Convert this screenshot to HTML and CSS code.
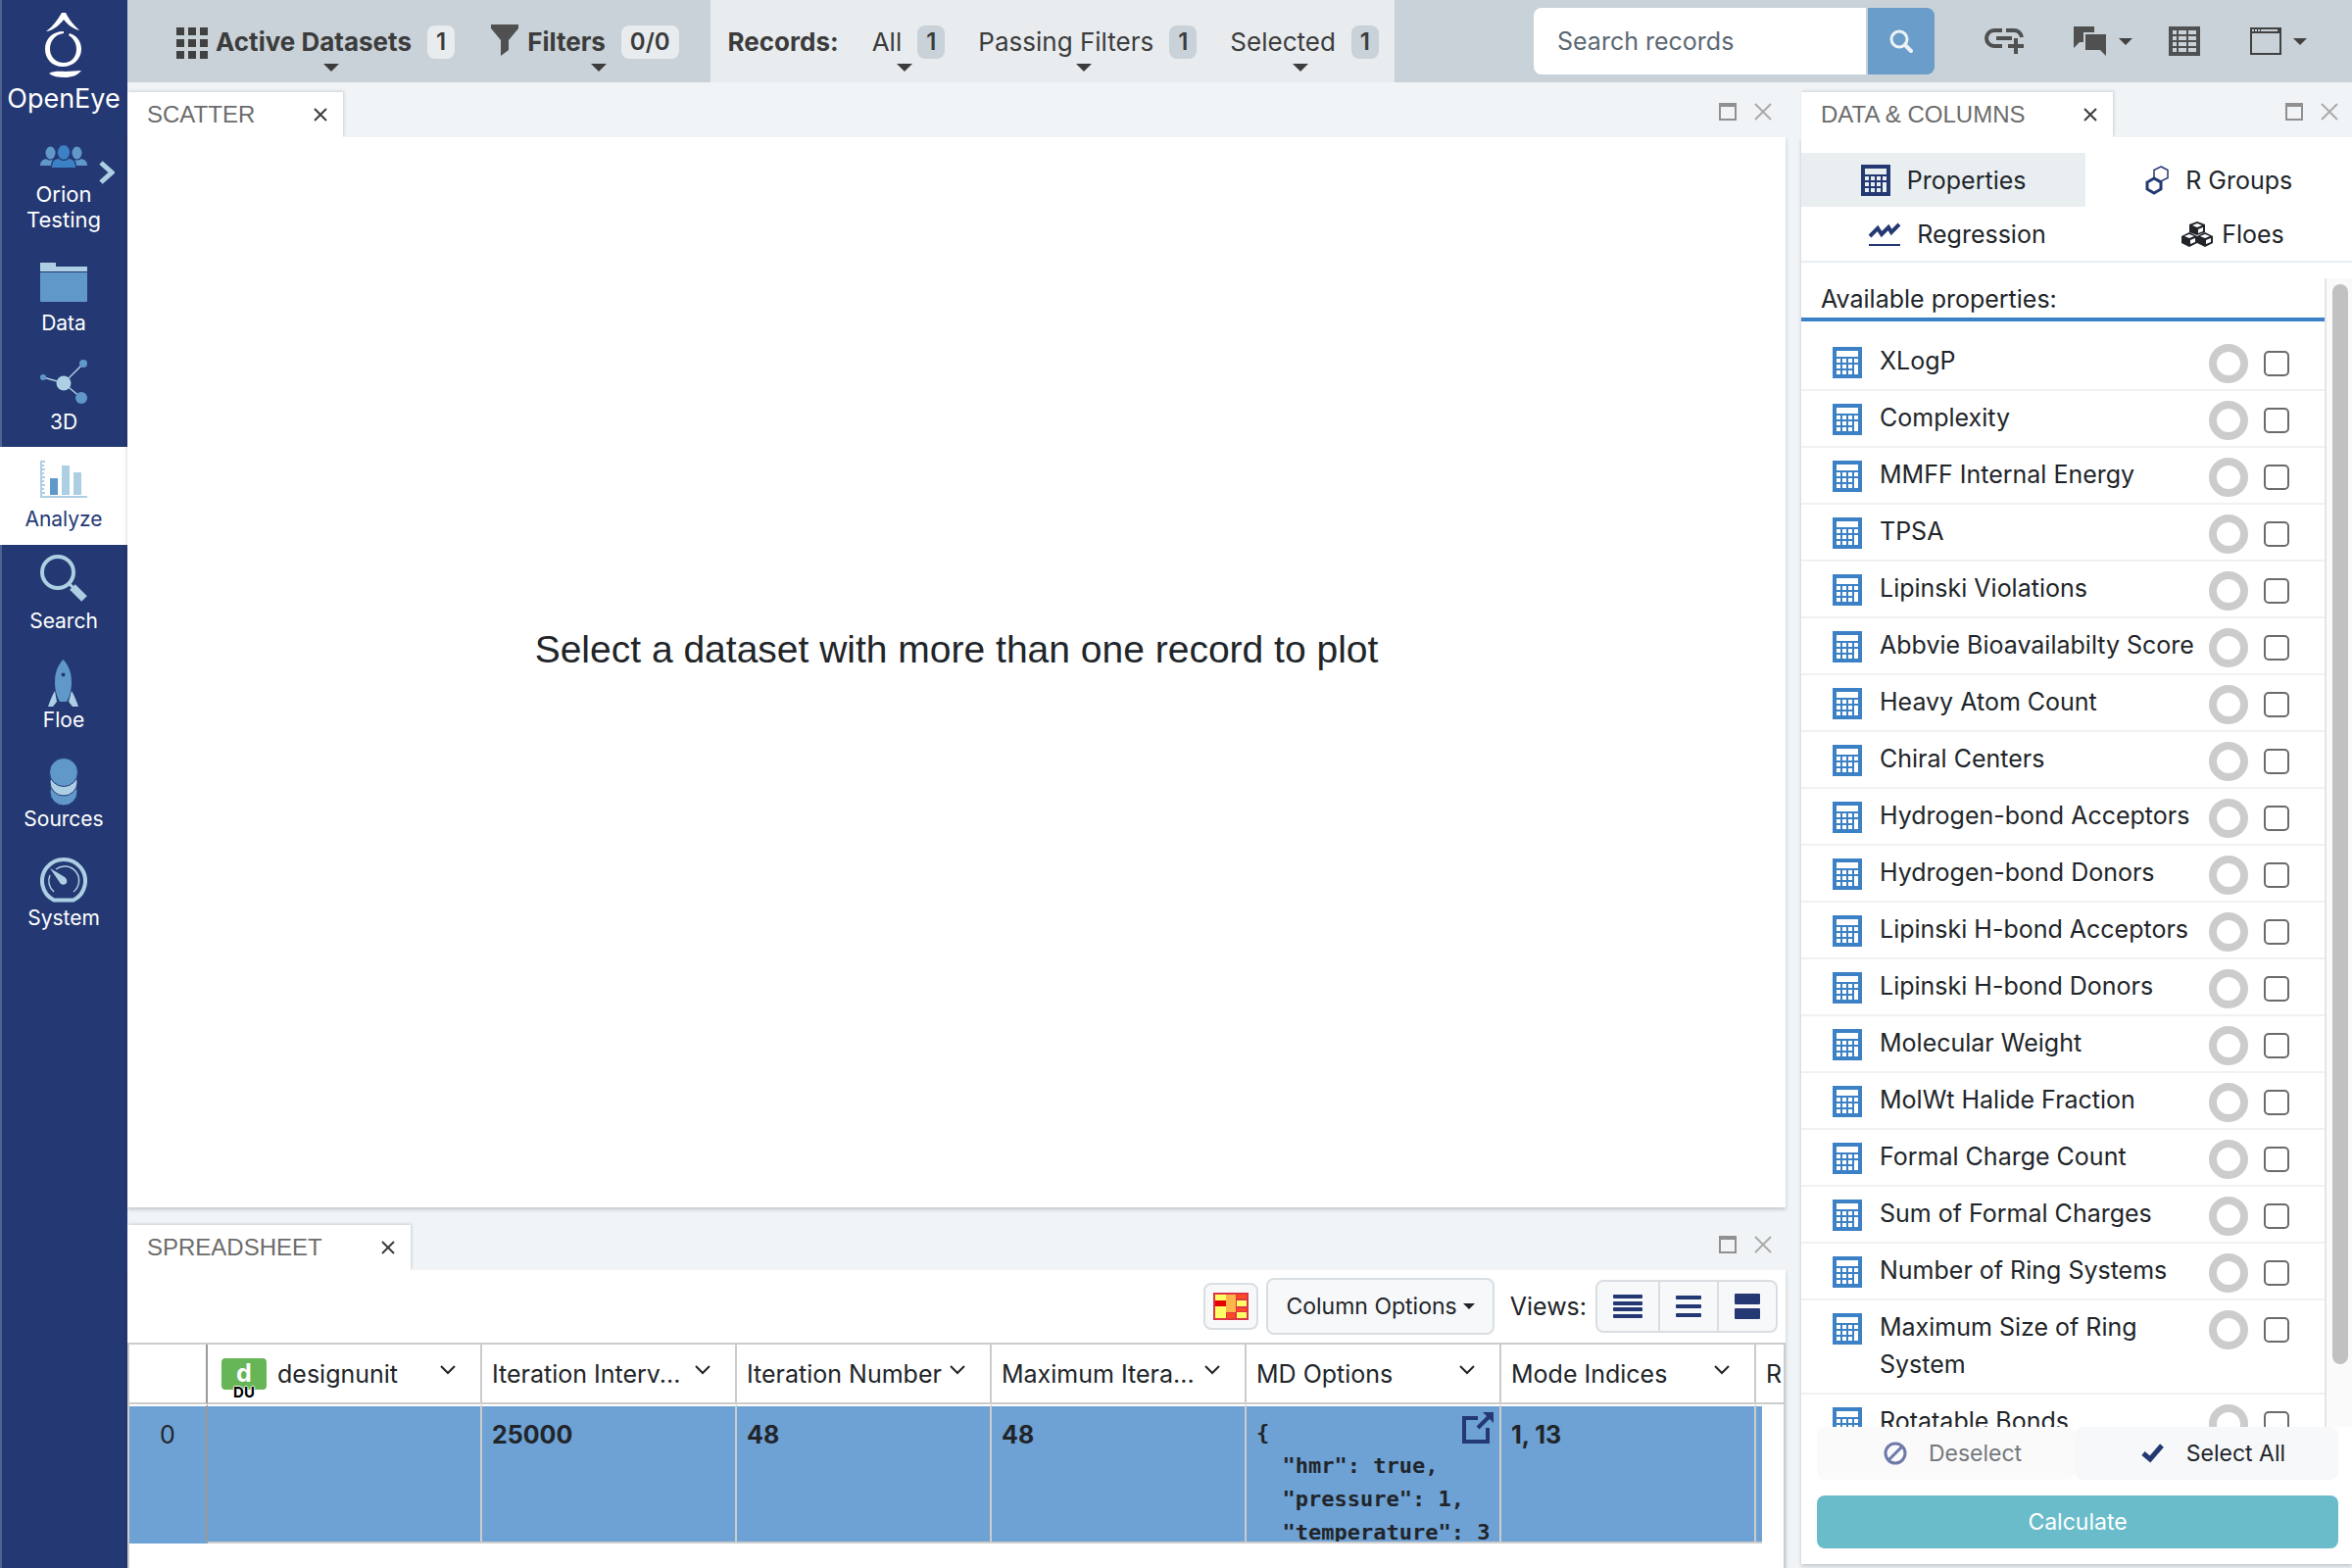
FILE: index.html
```html
<!DOCTYPE html>
<html lang="en">
	<head>
		<meta charset="UTF-8" />
		<title>Orion - Analyze</title>
		<link rel="stylesheet" href="styles.css">
	</head>

	<body>
		<!-- shared icons -->
		<svg class="sprite" aria-hidden="true">
			<symbol id="calc" viewBox="0 0 30 32">
				<path fill="currentColor" fill-rule="evenodd" d="M0 0h30v32H0zM4 4v6h22V4zM4 12v4h4v-4zM10 12v4h4v-4zM16 12v4h4v-4zM22 12v4h4v-4zM4 18v4h4v-4zM10 18v4h4v-4zM16 18v4h4v-4zM4 24v4h4v-4zM10 24v4h4v-4zM16 24v4h4v-4zM22 18v10h4V18z" />
			</symbol>
			<symbol id="close" viewBox="0 0 14 14">
				<path d="M1 1l12 12M13 1L1 13" stroke="currentColor" stroke-width="2" fill="none" />
			</symbol>
			<symbol id="cross" viewBox="0 0 18 18">
				<path d="M1 1l16 16M17 1L1 17" stroke="currentColor" stroke-width="2" fill="none" />
			</symbol>
			<symbol id="maximize" viewBox="0 0 18 18">
				<path fill="currentColor" fill-rule="evenodd" d="M0 0h18v18H0zM2 4v12h14V4z" />
			</symbol>
			<symbol id="chevron" viewBox="0 0 16 10">
				<path d="M1 1l7 7 7-7" stroke="currentColor" stroke-width="2" fill="none" />
			</symbol>
		</svg>

		<nav class="sidebar">
			<a class="logo" href="#">
				<svg width="40" height="68" viewBox="0 0 40 68" fill="#fff">
					<path d="M2 20C9 15 14 8 18 1h4c4 8 9 13 14 18-7-2-12-6-16-11C16 13 10 19 2 20z" />
					<path fill-rule="evenodd" d="M20 20C8 20 1 28 1 38s7 18 18 18 19-8 19-18c0-8-5-14-12-16l-1 2c5 3 8 8 8 14 0 8-5 14-13 14S6 46 6 38s5-15 14-16z" />
					<path d="M5 63c5-3 12-2 17-2l16-1c-4 5-10 7-17 7-6 0-12-1-16-4z" />
				</svg>
				OpenEye
			</a>
			<button class="project">
				<svg width="48" height="24" viewBox="0 0 48 24">
					<g fill="#6098c9">
						<ellipse cx="10.500" cy="8" rx="5" ry="6.500" />
						<ellipse cx="37.500" cy="8" rx="5" ry="6.500" />
						<path d="M0 21c0-4 2-6 6-7 3 2 6 2 8 0-2 2-3 4-3 7zM48 21c0-4-2-6-6-7-3 2-6 2-8 0 2 2 3 4 3 7z" />
					</g>
					<path fill="#3c81c5" stroke="#243973" d="M11.500 23.500c0-6 2-9 7-10 4 2.500 7 2.500 11 0 5 1 7 4 7 10z" />
					<ellipse cx="24" cy="7.500" rx="6.500" ry="7.800" fill="#3c81c5" stroke="#243973" />
				</svg>
				<span>Orion<br>Testing</span>
				<svg class="expand" width="16" height="24" viewBox="0 0 16 24">
					<path d="M2 2l11 10L2 22" fill="none" stroke="#adcfe3" stroke-width="5" />
				</svg>
			</button>
			<a class="nav-item" href="#">
				<svg width="48" height="54" viewBox="0 0 48 54">
					<path fill="#adcfe3" d="M0 6h16v4h32v5H0z" />
					<path fill="#6098c9" d="M0 16h48v29a1 1 0 0 1-1 1H1a1 1 0 0 1-1-1z" />
				</svg>
				Data
			</a>
			<a class="nav-item" href="#">
				<svg width="48" height="54" viewBox="0 0 48 54">
					<path d="M3 22l21 6L44 8M24 28l18 15" fill="none" stroke="#adcfe3" stroke-width="1.500" />
					<circle cx="24" cy="28" r="7.500" fill="#adcfe3" />
					<g fill="#6098c9"><circle cx="3" cy="22" r="3" /><circle cx="44" cy="8" r="4" /><circle cx="42" cy="43" r="6" /></g>
				</svg>
				3D
			</a>
			<a class="nav-item active" href="#">
				<svg width="48" height="54" viewBox="0 0 48 54">
					<path d="M1 8v37h47" fill="none" stroke="#adcfe3" stroke-width="2" />
					<path d="M2 9h3M2 13h2M2 17h3M2 21h2M2 25h3M2 29h2M2 33h3M2 37h2M2 41h3" stroke="#6098c9" />
					<path fill="#6098c9" d="M10 26h8v17h-8z" />
					<path fill="#adcfe3" d="M22 13h8v30h-8zM34 20h8v23h-8z" />
				</svg>
				Analyze
			</a>
			<a class="nav-item" href="#">
				<svg width="48" height="54" viewBox="0 0 48 54">
					<circle cx="18" cy="18" r="16" fill="none" stroke="#adcfe3" stroke-width="4" />
					<path d="M29 29l5 5" stroke="#adcfe3" stroke-width="3" />
					<path d="M33 33l12 12" stroke="#adcfe3" stroke-width="8" />
				</svg>
				Search
			</a>
			<a class="nav-item" href="#">
				<svg width="48" height="54" viewBox="0 0 48 54">
					<path fill="#adcfe3" d="M15 38l2 11-4 5H8c2-6 4-11 7-16zM32 38l-3 11 4 5h6c-2-6-4-11-7-16z" />
					<path fill="#6098c9" fill-rule="evenodd" d="M23.500 6C18 12 15 19 15 29c0 8 2 15 5 20h7c3-5 5-12 5-20 0-10-3-17-8.500-23zm0 13.500a2 2 0 1 0 0 4 2 2 0 0 0 0-4z" />
				</svg>
				Floe
			</a>
			<a class="nav-item" href="#">
				<svg width="48" height="54" viewBox="0 0 48 54" stroke="#243973">
					<circle cx="24" cy="40" r="14" fill="#6098c9" />
					<circle cx="24" cy="30" r="14" fill="#adcfe3" />
					<circle cx="24" cy="20" r="14.500" fill="#6098c9" />
				</svg>
				Sources
			</a>
			<a class="nav-item" href="#">
				<svg width="48" height="54" viewBox="0 0 48 54" fill="none" stroke="#adcfe3">
					<path stroke-width="4" d="M14 49.500a22 22 0 1 1 20 0z" />
					<path stroke-width="1.500" d="M16 18a14.500 14.500 0 0 1 18 23M10 24a14.500 14.500 0 0 0 4 17" />
					<path fill="#adcfe3" stroke="none" d="M10 17l15 9c5 4 1 10-4 7z" />
				</svg>
				System
			</a>
		</nav>

		<div class="app">
			<header class="topbar">
				<div class="datasets">
					<svg class="grid-icon" width="32" height="32" viewBox="0 0 32 32">
						<path fill="#414141" d="M0 0h8v8H0zM12 0h8v8h-8zM24 0h8v8h-8zM0 12h8v8H0zM12 12h8v8h-8zM24 12h8v8h-8zM0 24h8v8H0zM12 24h8v8h-8zM24 24h8v8h-8z" />
					</svg>
					<button class="menu"><b>Active Datasets</b><span class="badge">1</span></button>
					<svg class="filter-icon" width="30" height="32" viewBox="0 0 30 32">
						<path fill="#505050" d="M1 0h28v4L19 16v10l-8 6V16L1 4z" />
					</svg>
					<button class="menu"><b>Filters</b><span class="badge">0/0</span></button>
				</div>
				<div class="records">
					<b>Records:</b>
					<button class="menu">All<span class="badge">1</span></button>
					<button class="menu">Passing Filters<span class="badge">1</span></button>
					<button class="menu">Selected<span class="badge">1</span></button>
				</div>
				<div class="tools">
					<form class="search">
						<input type="text" placeholder="Search records" aria-label="Search records">
						<button type="button" aria-label="Search">
							<svg width="24" height="24" viewBox="0 0 24 24" fill="none" stroke="#eef2f5">
								<circle cx="10" cy="10" r="8" stroke-width="3" />
								<path d="M16 16l6 6" stroke-width="4" stroke-linecap="round" />
							</svg>
						</button>
					</form>
					<button class="tool plain" aria-label="Add link">
						<svg width="40" height="28" viewBox="0 0 40 28" fill="none" stroke="#505050" stroke-width="4">
							<path d="M18 3h-8a8 8 0 0 0 0 16h8M22 3h8a8 8 0 0 1 8 7M12 11h16M32 11v16M24 19h16" />
						</svg>
					</button>
					<button class="tool caret" aria-label="Comments">
						<svg width="34" height="30" viewBox="0 0 34 30" fill="#505050">
							<path d="M0 0h21v6H10v10H6l-6 6z" />
							<path d="M12 8h21v22l-6-6H12z" />
						</svg>
					</button>
					<button class="tool plain" aria-label="Table">
						<svg width="32" height="30" viewBox="0 0 32 30">
							<path fill="#505050" fill-rule="evenodd" d="M0 0h32v30H0zM4 4v4h4V4zM10 4v4h8V4zM20 4v4h8V4zM4 10v4h4v-4zM10 10v4h8v-4zM20 10v4h8v-4zM4 16v4h4v-4zM10 16v4h8v-4zM20 16v4h8v-4zM4 22v4h4v-4zM10 22v4h8v-4zM20 22v4h8v-4z" />
						</svg>
					</button>
					<button class="tool caret" aria-label="Layout">
						<svg width="32" height="28" viewBox="0 0 32 28">
							<path fill="#414141" fill-rule="evenodd" d="M0 0h32v28H0zM2 6v20h28V6zM2 2v2h2V2zM5 2v2h2V2zM8 2v2h2V2zM11 2v2h17V2z" />
						</svg>
					</button>
				</div>
			</header>

			<main class="dock">
				<div class="left">
					<section class="pane scatter">
						<div class="tabs">
							<div class="tab">SCATTER <button aria-label="Close"><svg width="14" height="14"><use href="#close" /></svg></button></div>
							<div class="controls">
								<button aria-label="Maximize" class="max"><svg width="18" height="18"><use href="#maximize" /></svg></button>
								<button aria-label="Close"><svg width="18" height="18"><use href="#cross" /></svg></button>
							</div>
						</div>
						<div class="content">
							<p class="message">Select a dataset with more than one record to plot</p>
						</div>
					</section>

					<section class="pane spreadsheet">
						<div class="tabs">
							<div class="tab">SPREADSHEET <button aria-label="Close"><svg width="14" height="14"><use href="#close" /></svg></button></div>
							<div class="controls">
								<button aria-label="Maximize" class="max"><svg width="18" height="18"><use href="#maximize" /></svg></button>
								<button aria-label="Close"><svg width="18" height="18"><use href="#cross" /></svg></button>
							</div>
						</div>
						<div class="content">
							<div class="toolbar">
								<button class="heatmap" aria-label="Heat map">
									<svg width="36" height="28" viewBox="0 0 36 28">
										<path fill="#dc3545" d="M0 0h36v28H0z" />
										<path fill="#ffff66" d="M2 2h11v24H2zM24 8h10v6H24zM24 20h10v6H24z" />
										<path fill="#fdb44b" d="M13 2h10v18H13z" />
										<path fill="#e60000" d="M2 8h11v6H2z" />
										<path fill="#ff4a22" d="M24 2h10v4H24zM24 16h10v3H24zM14 21h8v5h-8z" />
									</svg>
								</button>
								<button class="options">Column Options</button>
								<span>Views:</span>
								<div class="views">
									<button aria-label="Compact rows"><svg width="30" height="24" fill="#243973"><rect width="30" height="4" rx="1" /><rect y="7" width="30" height="4" rx="1" /><rect y="13" width="30" height="4" rx="1" /><rect y="20" width="30" height="4" rx="1" /></svg></button>
									<button aria-label="Medium rows"><svg width="26" height="22" fill="#243973"><rect width="26" height="4" rx="1" /><rect y="9" width="26" height="4" rx="1" /><rect y="18" width="26" height="4" rx="1" /></svg></button>
									<button aria-label="Large rows"><svg width="26" height="26" fill="#243973"><rect width="26" height="11" rx="1" /><rect y="15" width="26" height="11" rx="1" /></svg></button>
								</div>
							</div>
							<div class="sheet">
								<table>
									<colgroup>
										<col class="index-col"><col class="unit-col"><col><col><col><col><col><col class="edge-col"><col>
									</colgroup>
									<thead>
										<tr>
											<th></th>
											<th><div class="head"><span class="du"><b>d</b><small>DU</small></span><span class="name">designunit</span><svg width="16" height="10"><use href="#chevron" /></svg></div></th>
											<th><div class="head"><span class="name">Iteration Interv...</span><svg width="16" height="10"><use href="#chevron" /></svg></div></th>
											<th><div class="head"><span class="name">Iteration Number</span><svg width="16" height="10"><use href="#chevron" /></svg></div></th>
											<th><div class="head"><span class="name">Maximum Itera...</span><svg width="16" height="10"><use href="#chevron" /></svg></div></th>
											<th><div class="head"><span class="name">MD Options</span><svg width="16" height="10"><use href="#chevron" /></svg></div></th>
											<th><div class="head"><span class="name">Mode Indices</span><svg width="16" height="10"><use href="#chevron" /></svg></div></th>
											<th colspan="2"><div class="head"><span class="name">R</span></div></th>
										</tr>
									</thead>
									<tbody>
										<tr>
											<td class="index">0</td>
											<td></td>
											<td>25000</td>
											<td>48</td>
											<td>48</td>
											<td class="json-cell">
												<div class="json">
<pre>{
  "hmr": true,
  "pressure": 1,
  "temperature": 3</pre>
													<button class="popout" aria-label="Open">
														<svg width="32" height="32" viewBox="0 0 32 32">
															<path d="M16 6H2v24h24V16" fill="none" stroke="#243973" stroke-width="4" />
															<path d="M16 16L28 4" stroke="#243973" stroke-width="4" />
															<path fill="#243973" d="M21 0h11v11z" />
														</svg>
													</button>
												</div>
											</td>
											<td>1, 13</td>
											<td class="edge"></td>
											<td class="blank"></td>
										</tr>
									</tbody>
								</table>
							</div>
						</div>
					</section>
				</div>

				<section class="pane right">
					<div class="tabs">
						<div class="tab">DATA &amp; COLUMNS <button aria-label="Close"><svg width="14" height="14"><use href="#close" /></svg></button></div>
						<div class="controls">
							<button aria-label="Maximize" class="max"><svg width="18" height="18"><use href="#maximize" /></svg></button>
							<button aria-label="Close"><svg width="18" height="18"><use href="#cross" /></svg></button>
						</div>
					</div>
					<div class="content">
						<div class="modes">
							<div class="mode-row">
								<button class="selected"><svg width="30" height="32"><use href="#calc" /></svg>Properties</button>
								<button>
									<svg width="24" height="30" viewBox="0 0 24 30" fill="none" stroke="#243973">
										<path d="M16 1l7 3.500v8L16 16l-7-3.500v-8z" stroke-width="1.500" />
										<path d="M9 13l7 4v7l-7 4-7-4v-7z" stroke-width="3" />
									</svg>
									R Groups
								</button>
							</div>
							<div class="mode-row">
								<button>
									<svg width="32" height="24" viewBox="0 0 32 24" fill="none" stroke="#243973">
										<path d="M1 14l8-8 4 6 7-7 3 5 8-8" stroke-width="4" />
										<path d="M0 23h32" stroke-width="2" />
									</svg>
									Regression
								</button>
								<button class="floes">
									<svg width="32" height="26" viewBox="0 0 32 26" fill="#212529">
										<path d="M16 0l8 3v8l-8 3-8-3V3z" />
										<path d="M8 11l8 4v7l-8 4-8-4v-7zM24 11l8 4v7l-8 4-8-4v-7z" />
										<path fill="#fff" d="M16 2l5 2-5 2-5-2zM17 8l5-2v4l-5 2zM8 13l5 2-5 2-5-2zM9 19l5-2v4l-5 2zM24 13l5 2-5 2-5-2zM25 19l5-2v4l-5 2z" />
									</svg>
									Floes
								</button>
							</div>
						</div>

						<div class="scroller">
							<div class="properties">
								<h2>Available properties:</h2>
								<ul>
									<li><svg width="30" height="32"><use href="#calc" /></svg><label for="p1">XLogP</label><i class="ring"></i><input type="checkbox" id="p1"></li>
									<li><svg width="30" height="32"><use href="#calc" /></svg><label for="p2">Complexity</label><i class="ring"></i><input type="checkbox" id="p2"></li>
									<li><svg width="30" height="32"><use href="#calc" /></svg><label for="p3">MMFF Internal Energy</label><i class="ring"></i><input type="checkbox" id="p3"></li>
									<li><svg width="30" height="32"><use href="#calc" /></svg><label for="p4">TPSA</label><i class="ring"></i><input type="checkbox" id="p4"></li>
									<li><svg width="30" height="32"><use href="#calc" /></svg><label for="p5">Lipinski Violations</label><i class="ring"></i><input type="checkbox" id="p5"></li>
									<li><svg width="30" height="32"><use href="#calc" /></svg><label for="p6">Abbvie Bioavailabilty Score</label><i class="ring"></i><input type="checkbox" id="p6"></li>
									<li><svg width="30" height="32"><use href="#calc" /></svg><label for="p7">Heavy Atom Count</label><i class="ring"></i><input type="checkbox" id="p7"></li>
									<li><svg width="30" height="32"><use href="#calc" /></svg><label for="p8">Chiral Centers</label><i class="ring"></i><input type="checkbox" id="p8"></li>
									<li><svg width="30" height="32"><use href="#calc" /></svg><label for="p9">Hydrogen-bond Acceptors</label><i class="ring"></i><input type="checkbox" id="p9"></li>
									<li><svg width="30" height="32"><use href="#calc" /></svg><label for="p10">Hydrogen-bond Donors</label><i class="ring"></i><input type="checkbox" id="p10"></li>
									<li><svg width="30" height="32"><use href="#calc" /></svg><label for="p11">Lipinski H-bond Acceptors</label><i class="ring"></i><input type="checkbox" id="p11"></li>
									<li><svg width="30" height="32"><use href="#calc" /></svg><label for="p12">Lipinski H-bond Donors</label><i class="ring"></i><input type="checkbox" id="p12"></li>
									<li><svg width="30" height="32"><use href="#calc" /></svg><label for="p13">Molecular Weight</label><i class="ring"></i><input type="checkbox" id="p13"></li>
									<li><svg width="30" height="32"><use href="#calc" /></svg><label for="p14">MolWt Halide Fraction</label><i class="ring"></i><input type="checkbox" id="p14"></li>
									<li><svg width="30" height="32"><use href="#calc" /></svg><label for="p15">Formal Charge Count</label><i class="ring"></i><input type="checkbox" id="p15"></li>
									<li><svg width="30" height="32"><use href="#calc" /></svg><label for="p16">Sum of Formal Charges</label><i class="ring"></i><input type="checkbox" id="p16"></li>
									<li><svg width="30" height="32"><use href="#calc" /></svg><label for="p17">Number of Ring Systems</label><i class="ring"></i><input type="checkbox" id="p17"></li>
									<li><svg width="30" height="32"><use href="#calc" /></svg><label for="p18">Maximum Size of Ring System</label><i class="ring"></i><input type="checkbox" id="p18"></li>
									<li><svg width="30" height="32"><use href="#calc" /></svg><label for="p19">Rotatable Bonds</label><i class="ring"></i><input type="checkbox" id="p19"></li>
								</ul>
							</div>
							<div class="track"><div class="thumb"></div></div>
						</div>

						<div class="actions">
							<div class="select-row">
								<button class="deselect" disabled>
									<svg width="24" height="24" viewBox="0 0 24 24" fill="none" stroke="#6d7aa8" stroke-width="3"><circle cx="12" cy="12" r="10" /><path d="M5 19L19 5" /></svg>
									Deselect
								</button>
								<button>
									<svg width="24" height="20" viewBox="0 0 24 20" fill="none" stroke="#243973" stroke-width="5"><path d="M2 10l7 6L21 2" /></svg>
									Select All
								</button>
							</div>
							<button class="calculate">Calculate</button>
						</div>
					</div>
				</section>
			</main>
		</div>
	</body>
</html>
```
FILE: styles.css
```css
* {
	box-sizing: border-box;
}
body {
	background-color: #f0f4f6;
	color: #212529;
	display: flex;
	font-family: Inter, "Liberation Sans", sans-serif;
	font-size: 25px;
	height: 100vh;
	line-height: 38px;
	margin: 0;
	overflow: hidden;
}
button {
	background: none;
	border: none;
	color: inherit;
	cursor: pointer;
	font: inherit;
	padding: 0;
}
svg {
	display: block;
	flex: none;
}
.sprite {
	height: 0;
	position: absolute;
	width: 0;
}

/* sidebar */
.sidebar {
	background-color: #243973;
	box-shadow: inset 2px 0 #4f6294;
	color: #fff;
	flex: 0 0 130px;
	line-height: 26px;
}
.sidebar a {
	align-items: center;
	color: inherit;
	display: flex;
	flex-direction: column;
	text-decoration: none;
}
.logo {
	font-size: 27px;
	gap: 8px;
	height: 148px;
	padding-top: 12px;
}
.project {
	align-items: center;
	display: flex;
	flex-direction: column;
	font-size: 22px;
	gap: 13px;
	height: 108px;
	position: relative;
	width: 100%;
}
.expand {
	position: absolute;
	right: 13px;
	top: 16px;
}
.nav-item {
	font-size: 21px;
	gap: 1px;
	height: 101px;
	padding-top: 6px;
}
.sidebar .active {
	background-color: #fff;
	color: #243973;
	height: 100px;
	margin: -2px 0 4px;
}

/* top bar */
.app {
	display: flex;
	flex: 1;
	flex-direction: column;
	min-width: 0;
}
.topbar {
	background-color: #c8d2d8;
	color: #3c3c3c;
	display: flex;
	flex: 0 0 84px;
	font-size: 26px;
	line-height: 34px;
}
.datasets {
	display: flex;
	padding: 26px 32px 0 50px;
}
.grid-icon {
	margin: 2px 8px 0 0;
}
.filter-icon {
	margin: -1px 8px 0 36px;
}
.records {
	background-color: #e8ecef;
	display: flex;
	gap: 34px;
	padding: 26px 16px 0 18px;
}
.menu {
	align-content: start;
	display: grid;
	grid-template-columns: auto auto;
	column-gap: 16px;
	row-gap: 5px;
}
.menu::after {
	border: 8px solid transparent;
	border-bottom: 0;
	border-top-color: #3c3c3c;
	content: "";
	grid-column: 1 / 3;
	justify-self: center;
	margin-right: 8px;
}
.badge {
	background-color: #e8ecef;
	border-radius: 8px;
	font-size: 24px;
	font-weight: 600;
	padding: 0 9px;
}
.records .badge {
	background-color: #c8d2d8;
}
.tools {
	align-items: center;
	display: flex;
	gap: 37px;
	margin-left: auto;
	padding-right: 46px;
}
.search {
	display: flex;
	font-size: 25px;
	gap: 2px;
	height: 68px;
	margin-bottom: 0;
	margin-right: 14px;
	width: 409px;
}
.search input {
	border: none;
	border-radius: 8px 0 0 8px;
	color: #3c3c3c;
	flex: 1;
	font: inherit;
	min-width: 0;
	padding: 0 24px;
}
.search input::placeholder {
	color: #5c6873;
}
.search button {
	align-items: center;
	background-color: #6b9dca;
	border-radius: 0 8px 8px 0;
	display: flex;
	justify-content: center;
	width: 68px;
}
.tool {
	align-items: center;
	display: flex;
	gap: 12px;
}
.tool.plain {
	padding-right: 14px;
}
.tool.caret::after {
	border: 7px solid transparent;
	border-bottom: 0;
	border-top-color: #414141;
	content: "";
}

/* docked panes */
.dock {
	display: flex;
	flex: 1;
	gap: 16px;
	min-height: 0;
	padding-top: 10px;
}
.left {
	display: flex;
	flex: 1;
	flex-direction: column;
	gap: 18px;
	min-width: 0;
}
.pane {
	display: flex;
	flex-direction: column;
}
.scatter {
	flex: 1;
}
.spreadsheet {
	flex: 0 0 350px;
}
.right {
	flex: 0 0 562px;
	margin-bottom: 4px;
	min-height: 0;
}
.tabs {
	color: #6c6c6c;
	display: flex;
	flex: 0 0 46px;
	font-family: "Liberation Sans", sans-serif;
	font-size: 24px;
	justify-content: space-between;
	line-height: 46px;
}
.tab {
	align-items: center;
	background-color: #fff;
	box-shadow: 1px -1px 3px rgba(0, 0, 0, 0.15);
	display: flex;
	gap: 60px;
	padding: 0 16px 0 20px;
}
.tab button {
	color: #3c3c3c;
}
.controls {
	display: flex;
	gap: 18px;
	padding: 11px 14px 0 0;
}
.controls button {
	color: #aaa;
	height: 18px;
}
.controls .max {
	color: #909090;
}
.content {
	background-color: #fff;
	box-shadow: 0 2px 4px rgba(0, 0, 0, 0.2);
	/* keeps the shadow off the tab above */
	clip-path: inset(0 -6px -6px -6px);
	display: flex;
	flex: 1;
	flex-direction: column;
	min-height: 0;
}
.message {
	font-family: "Liberation Sans", sans-serif;
	font-size: 39px;
	line-height: 46px;
	margin: auto;
	padding-bottom: 46px;
}

/* spreadsheet */
.toolbar {
	align-items: center;
	display: flex;
	flex: 0 0 74px;
	justify-content: flex-end;
	padding-right: 8px;
}
.toolbar button {
	align-items: center;
	background-color: #f7f8fa;
	border: 2px solid #d9dee3;
	border-radius: 8px;
	display: flex;
	justify-content: center;
}
.toolbar .heatmap {
	height: 48px;
	margin-right: 8px;
	width: 56px;
}
.toolbar .options {
	font-size: 23px;
	gap: 6px;
	height: 58px;
	margin-right: 16px;
	padding: 0 18px;
}
.options::after {
	border: 6px solid transparent;
	border-bottom: 0;
	border-top-color: #212529;
	content: "";
}
.views {
	display: flex;
	height: 54px;
	margin-left: 9px;
}
.views button {
	border-radius: 0;
	margin-left: -2px;
	width: 62px;
}
.views button:first-child {
	border-radius: 8px 0 0 8px;
	margin-left: 0;
	width: 66px;
}
.views button:last-child {
	border-radius: 0 8px 8px 0;
}
.sheet {
	border: 2px solid #ccc;
	border-bottom: none;
	flex: 1;
	overflow: hidden;
}
table {
	border-collapse: separate;
	border-spacing: 0;
	table-layout: fixed;
	width: 1920px;
}
col {
	width: 260px;
}
.index-col {
	width: 80px;
}
.unit-col {
	width: 280px;
}
.edge-col {
	width: 6px;
}
th {
	border-bottom: 2px solid #ccc;
	border-right: 2px solid #ccc;
	font-weight: normal;
	height: 61px;
	padding: 0 10px;
	text-align: left;
}
.head {
	align-items: center;
	display: flex;
}
.head svg {
	margin: -8px 15px 0 auto;
}
.name {
	white-space: nowrap;
}
.du {
	align-items: center;
	background-color: #66b556;
	border-radius: 4px;
	color: #fff;
	display: flex;
	flex-direction: column;
	height: 32px;
	line-height: 30px;
	margin: 0 11px 0 4px;
	width: 46px;
}
.du small {
	color: #000;
	font-size: 15px;
	font-weight: bold;
	line-height: 10px;
	text-shadow: 0 -1px 1px #fff, 1px 0 1px #fff, -1px 0 1px #fff;
}
td {
	background-color: #6ea1d4;
	border-bottom: 2px solid #ccc;
	border-right: 2px solid #ccc;
	border-top: 2px solid #fff;
	font-weight: bold;
	height: 142px;
	padding: 10px 10px 0;
	vertical-align: top;
}
th:first-child,
td:first-child {
	border-right-color: #999;
}
.index {
	border-bottom-color: #6ea1d4;
	font-weight: normal;
	text-align: center;
}
.edge {
	border-right: none;
	padding: 0;
}
.blank {
	background: none;
	border: none;
}
.json-cell {
	padding: 6px 6px 0 10px;
}
.json {
	height: 132px;
	overflow: hidden;
	position: relative;
}
pre {
	font: bold 22px/34px "DejaVu Sans Mono", monospace;
	margin: 4px 4px 0 0;
	overflow: hidden;
}
.popout {
	position: absolute;
	right: 0;
	top: 0;
}

/* data & columns */
.modes {
	border-bottom: 2px solid #e8eef1;
	padding-top: 16px;
}
.mode-row {
	display: flex;
}
.mode-row button {
	align-items: center;
	display: flex;
	flex: 1 1 auto;
	gap: 17px;
	height: 55px;
	justify-content: center;
}
.mode-row .selected {
	background-color: #e9eef1;
}
.selected svg {
	color: #243973;
}
.mode-row .floes {
	gap: 9px;
}
.scroller {
	display: flex;
	flex: 1;
	min-height: 0;
	padding-top: 16px;
}
.properties {
	flex: 1;
	overflow: hidden;
}
.properties h2 {
	border-bottom: 4px solid #3c81c5;
	font-size: 25px;
	font-weight: normal;
	line-height: 38px;
	margin: 0 0 13px;
	padding: 2px 0 0 20px;
}
.properties ul {
	list-style: none;
	margin: 0;
	padding: 0;
}
.properties li {
	align-items: flex-start;
	border-bottom: 2px solid #f0f1f2;
	display: flex;
	padding: 8px 36px 10px 32px;
}
.properties li svg {
	color: #3c81c5;
	margin: 5px 18px 0 0;
}
.properties label {
	flex: 1;
}
.ring {
	border: 8px solid #ccc;
	border-radius: 50%;
	flex: none;
	height: 40px;
	margin: 2px 16px -4px 0;
	width: 40px;
}
input[type="checkbox"] {
	appearance: none;
	background-color: #fff;
	border: 2px solid #6b6b6b;
	border-radius: 5px;
	flex: none;
	height: 26px;
	margin: 9px 0 0;
	width: 26px;
}
.track {
	background-color: #fafafa;
	border-left: 2px solid #e5e5e5;
	flex: 0 0 28px;
	padding: 6px 4px 6px 6px;
}
.thumb {
	background-color: #c1c1c1;
	border-radius: 8px;
	height: 95%;
}
.actions {
	font-size: 23px;
	padding: 0 14px 16px 16px;
}
.select-row {
	display: flex;
	margin-bottom: 16px;
}
.select-row button {
	align-items: center;
	background-color: #f7f8fa;
	border-radius: 8px;
	display: flex;
	flex: 1 1 auto;
	gap: 22px;
	height: 54px;
	justify-content: center;
	padding-left: 14px;
}
.select-row .deselect {
	background-color: #fafafb;
	color: #75787b;
}
.calculate {
	background-color: #6abccb;
	border-radius: 8px;
	color: #fff;
	height: 54px;
	width: 100%;
}
```
